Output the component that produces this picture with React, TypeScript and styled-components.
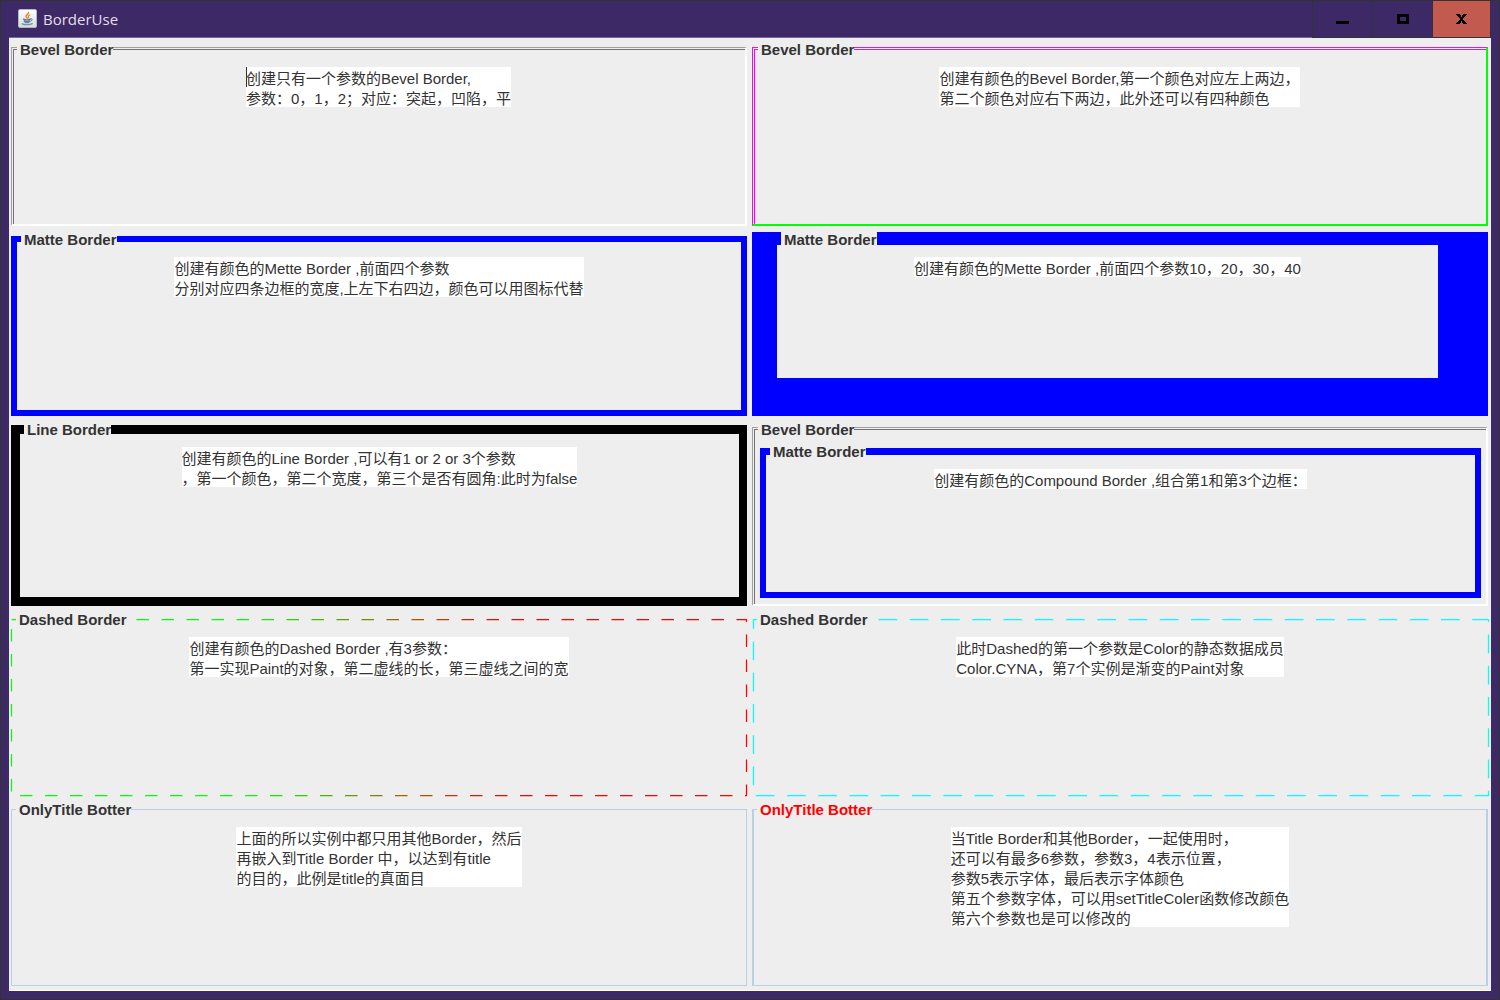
import React from "react";
import styled, { createGlobalStyle, css } from "styled-components";

const SURFACE = "#eeeeee";
const PURPLE = "#3d2966";

const GlobalStyle = createGlobalStyle`
  *, *::before, *::after { box-sizing: border-box; }
  body {
    margin: 0;
    background: ${PURPLE};
    font-family: "Liberation Sans", Arial, "Noto Sans CJK SC", sans-serif;
    font-size: 15px;
    color: #333333;
  }
`;

const Window = styled.div`
  display: flex;
  flex-direction: column;
  min-height: 100vh;
  padding: 0 8px 8px;
  border: 1px solid #333333;
  background: ${PURPLE};
`;

const TitleBar = styled.header`
  display: flex;
  height: 37px;
`;

const TitleArea = styled.div`
  display: flex;
  flex: 1;
  align-items: center;
  gap: 5px;
  padding-left: 9px;
  border-bottom: 1px solid #76679c;
`;

const AppName = styled.h1`
  margin: 0;
  font: 400 15px/20px "Open Sans", "Noto Sans", sans-serif;
  color: #e2dfe8;
`;

const WindowButton = styled.button<{ $tone?: "close" }>`
  display: flex;
  align-items: center;
  justify-content: center;
  width: ${(p) => (p.$tone === "close" ? 59 : 60)}px;
  padding: 0;
  border: solid #33313a;
  border-width: ${(p) => (p.$tone === "close" ? "0 1px 1px" : "0 0 1px 1px")};
  background: ${(p) => (p.$tone === "close" ? "#c35a50" : PURPLE)};
`;

const Content = styled.main`
  display: grid;
  flex: 1;
  grid-template-columns: repeat(2, minmax(0, 1fr));
  grid-auto-rows: 1fr;
  gap: 6px 5px;
  padding: 4px 3px 4px 2px;
  border-bottom: 1px solid #ffffff;
  background: ${SURFACE};
`;

type Kind =
  | "bevel"
  | "colorBevel"
  | "matte"
  | "wideMatte"
  | "innerMatte"
  | "line"
  | "dashed"
  | "etched"
  | "thickEtched";

/* Height of the caption strip that the top edge is centred on. */
const strip: Record<Kind, number> = {
  bevel: 11,
  colorBevel: 11,
  matte: 14,
  wideMatte: 13,
  innerMatte: 15,
  line: 15,
  dashed: 15,
  etched: 15,
  thickEtched: 15,
};

/* Space between the left edge and the gap opened for the caption. */
const indent: Record<Kind, number> = {
  bevel: 5,
  colorBevel: 5,
  matte: 4,
  wideMatte: 4,
  innerMatte: 4,
  line: 4,
  dashed: 5,
  etched: 4,
  thickEtched: 3,
};

const edges: Record<Kind, ReturnType<typeof css>> = {
  bevel: css`
    border-style: solid;
    border-width: 1px 2px 2px 1px;
    border-color: #a0a0a0 #ffffff #ffffff #a0a0a0;
    box-shadow: inset 1px 1px ${SURFACE}, inset 2px 2px #737373;
  `,
  colorBevel: css`
    border-style: solid;
    border-width: 1px 2px 2px 1px;
    border-color: #e815e8 #00ff00 #00ff00 #ff00ff;
    box-shadow: inset 1px 1px #ffffff, inset 2px 2px #f00af0;
  `,
  matte: css`
    border: 6px solid #0000ff;
  `,
  wideMatte: css`
    border: solid #0000ff;
    border-width: 13px 50px 38px 25px;
  `,
  innerMatte: css`
    border: 6px solid #0000ff;
    border-top-width: 7px;
  `,
  line: css`
    border: 9px solid #000000;
    border-right-width: 8px;
  `,
  dashed: css`
    border: 0;
  `,
  etched: css`
    border: 1px solid #b8cfe5;
  `,
  thickEtched: css`
    border: solid #b8cfe5;
    border-width: 1px 2px;
  `,
};

const Panel = styled.fieldset<{ $kind: Kind; $nested?: boolean }>`
  position: relative;
  display: flex;
  align-items: ${(p) => (p.$nested ? "stretch" : "flex-start")};
  justify-content: center;
  min-width: 0;
  margin: 0;
  padding: ${(p) => (p.$nested ? 0 : 25 - strip[p.$kind])}px 0 0;
  ${(p) => edges[p.$kind]}

  & > fieldset {
    flex: 1;
    margin: 11px 5px 6px 7px;
  }
`;

const Caption = styled.legend<{ $kind: Kind; $color?: string }>`
  position: relative;
  z-index: 1;
  height: ${(p) => strip[p.$kind]}px;
  margin-left: ${(p) => indent[p.$kind]}px;
  padding: 0 0 0 3px;
  background: ${SURFACE};
  font-weight: 700;
  line-height: 16px;
  color: ${(p) => p.$color ?? "#333333"};
`;

const NoteFrame = styled.div`
  position: relative;
  display: flex;
`;

const Note = styled.textarea<{ $lines: number }>`
  field-sizing: content;
  display: block;
  height: ${(p) => p.$lines * 20}px;
  margin: 0;
  padding: 2px 0 0;
  border: 0;
  outline: 0;
  overflow: hidden;
  resize: none;
  white-space: pre;
  background: #ffffff;
  font: inherit;
  line-height: 20px;
  color: #333333;
`;

const Caret = styled.span`
  position: absolute;
  top: 0;
  left: 0;
  width: 1px;
  height: 20px;
  background: #333333;
`;

/* Drawn from the middle of the caption strip down to the panel's last row. */
const DashFrame = styled.svg`
  position: absolute;
  top: -8px;
  left: 0;
  width: 100%;
  height: calc(100% + 7px);
  overflow: visible;
  pointer-events: none;

  rect {
    width: calc(100% - 1px);
    height: 100%;
    fill: none;
  }
`;

interface PanelData {
  title: string;
  kind: Kind;
  text?: string;
  caret?: boolean;
  color?: string;
  dash?: "gradient" | "cyan";
  inner?: PanelData;
}

const panels: PanelData[] = [
  {
    title: "Bevel Border",
    kind: "bevel",
    caret: true,
    text: "创建只有一个参数的Bevel Border,\n参数：0，1，2；对应：突起，凹陷，平",
  },
  {
    title: "Bevel Border",
    kind: "colorBevel",
    text: "创建有颜色的Bevel Border,第一个颜色对应左上两边，\n第二个颜色对应右下两边，此外还可以有四种颜色",
  },
  {
    title: "Matte Border",
    kind: "matte",
    text: "创建有颜色的Mette Border ,前面四个参数\n分别对应四条边框的宽度,上左下右四边，颜色可以用图标代替",
  },
  {
    title: "Matte Border",
    kind: "wideMatte",
    text: "创建有颜色的Mette Border ,前面四个参数10，20，30，40",
  },
  {
    title: "Line Border",
    kind: "line",
    text: "创建有颜色的Line Border ,可以有1 or 2 or 3个参数\n，第一个颜色，第二个宽度，第三个是否有圆角:此时为false",
  },
  {
    title: "Bevel Border",
    kind: "bevel",
    inner: {
      title: "Matte Border",
      kind: "innerMatte",
      text: "创建有颜色的Compound Border ,组合第1和第3个边框：",
    },
  },
  {
    title: "Dashed Border",
    kind: "dashed",
    dash: "gradient",
    text: "创建有颜色的Dashed Border ,有3参数：\n第一实现Paint的对象，第二虚线的长，第三虚线之间的宽",
  },
  {
    title: "Dashed Border",
    kind: "dashed",
    dash: "cyan",
    text: "此时Dashed的第一个参数是Color的静态数据成员\nColor.CYNA，第7个实例是渐变的Paint对象",
  },
  {
    title: "OnlyTitle Botter",
    kind: "etched",
    text: "上面的所以实例中都只用其他Border，然后\n再嵌入到Title Border 中，以达到有title\n的目的，此例是title的真面目",
  },
  {
    title: "OnlyTitle Botter",
    kind: "thickEtched",
    color: "#ff0000",
    text: "当Title Border和其他Border，一起使用时，\n还可以有最多6参数，参数3，4表示位置，\n参数5表示字体，最后表示字体颜色\n第五个参数字体，可以用setTitleColer函数修改颜色\n第六个参数也是可以修改的",
  },
];

function Dashes({ type }: { type: "gradient" | "cyan" }) {
  if (type === "cyan") {
    return (
      <DashFrame aria-hidden="true">
        <rect x="1.5" y="0.5" stroke="#00ffff" strokeWidth="1.25" strokeDasharray="18.75 12.5" />
      </DashFrame>
    );
  }
  return (
    <DashFrame aria-hidden="true">
      <defs>
        <linearGradient id="dashPaint" gradientUnits="userSpaceOnUse" x1="240" y1="0" x2="490" y2="0">
          <stop offset="0" stopColor="#00ff00" />
          <stop offset="1" stopColor="#ff0000" />
        </linearGradient>
      </defs>
      <rect x="0.5" y="0.5" stroke="url(#dashPaint)" strokeWidth="1.25" strokeDasharray="12.5 12.5" />
    </DashFrame>
  );
}

function BorderPanel({ data }: { data: PanelData }) {
  const lines = data.text ? data.text.split("\n").length : 0;
  return (
    <Panel $kind={data.kind} $nested={!!data.inner}>
      {data.dash && <Dashes type={data.dash} />}
      <Caption $kind={data.kind} $color={data.color}>
        {data.title}
      </Caption>
      {data.inner && <BorderPanel data={data.inner} />}
      {data.text && (
        <NoteFrame>
          <Note
            aria-label={data.title}
            rows={lines}
            $lines={lines}
            defaultValue={data.text}
            wrap="off"
            spellCheck={false}
          />
          {data.caret && <Caret />}
        </NoteFrame>
      )}
    </Panel>
  );
}

function JavaIcon() {
  return (
    <svg width="20" height="20" viewBox="0 0 20 20" aria-hidden="true">
      <defs>
        <linearGradient id="tile" x1="0" y1="0" x2="0" y2="1">
          <stop offset="0" stopColor="#ffffff" />
          <stop offset="1" stopColor="#d3dade" />
        </linearGradient>
      </defs>
      <rect x="0.5" y="0.5" width="18" height="18" rx="1.5" fill="url(#tile)" stroke="#b4b8bd" />
      <g fill="none" strokeLinecap="round">
        <path d="M10.400 3.500c.8 1.800-2.800 2.300-2.400 4 .2.700 1 1.100 1.300 1.700" stroke="#e8842c" strokeWidth="1.500" />
        <path d="M11.800 6c-1.800.7-1.900 1.500-1.200 2.800" stroke="#e8842c" strokeWidth="1.200" />
        <path d="M5.500 10.200c2 .8 4.800.8 6.800 0M6.200 12c1.700.7 3.900.7 5.400 0" stroke="#56789a" strokeWidth="1.400" />
        <path d="M12.800 9.800c2.200-.4 1.900 1.800-.3 2.400M7 13.500c1.300.4 2.700.4 4 0" stroke="#56789a" />
        <path d="M4.200 14.800c2.500 1.200 8 1.100 10-.2" stroke="#7590a8" strokeWidth="1.300" />
      </g>
    </svg>
  );
}

export default function App() {
  return (
    <>
      <GlobalStyle />
      <Window>
        <TitleBar>
          <TitleArea>
            <JavaIcon />
            <AppName>BorderUse</AppName>
          </TitleArea>
          <WindowButton type="button" aria-label="Minimize">
            <svg width="13" height="10" aria-hidden="true">
              <path d="M0 7h13v3H0z" />
            </svg>
          </WindowButton>
          <WindowButton type="button" aria-label="Maximize">
            <svg width="12" height="10" aria-hidden="true">
              <path fillRule="evenodd" d="M0 0h12v10H0zM3 3v4h6V3z" />
            </svg>
          </WindowButton>
          <WindowButton type="button" aria-label="Close" $tone="close">
            <svg width="11" height="10" shapeRendering="crispEdges" aria-hidden="true">
              <path d="M0 0h4v1h1v2h1V1h1V0h4v1h-1v1H9v1H8v1H7v2h1v1h1v1h1v1h1v1H7V9H6V7H5v2H4v1H0V9h1V8h1V7h1V6h1V4H3V3H2V2H1V1H0z" />
            </svg>
          </WindowButton>
        </TitleBar>
        <Content>
          {panels.map((panel, i) => (
            <BorderPanel key={i} data={panel} />
          ))}
        </Content>
      </Window>
    </>
  );
}
